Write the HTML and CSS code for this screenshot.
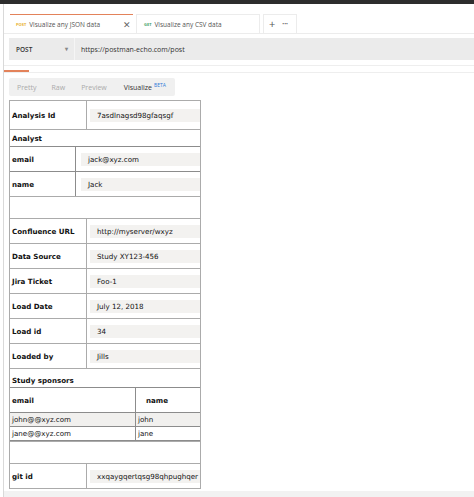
FILE: index.html
```html
<!DOCTYPE html>
<html>
<head>
<meta charset="utf-8">
<link rel="stylesheet" href="styles.css">
</head>
<body>
<div class="topbar"></div>
<div class="main">
  <div class="tabs">
    <div class="tab active">
      <span class="method post">POST</span>
      <span class="tab-title">Visualize any JSON data</span>
      <span class="close">✕</span>
    </div>
    <div class="tab">
      <span class="method get">GET</span>
      <span class="tab-title">Visualize any CSV data</span>
    </div>
    <div class="tab-actions">
      <span class="plus">+</span>
      <span class="dots">•••</span>
    </div>
  </div>
  <div class="reqbar">
    <div class="method-select"><span>POST</span><span class="caret">▾</span></div>
    <div class="url">https://postman-echo.com/post</div>
  </div>
  <div class="resp-tabs"><div class="resp-active"></div></div>
  <div class="vtabs">
    <span class="vtab">Pretty</span>
    <span class="vtab">Raw</span>
    <span class="vtab">Preview</span>
    <span class="vtab on">Visualize<sup>BETA</sup></span>
  </div>
  <table class="data">
    <tr class="r30"><th>Analysis Id</th><td><div class="val">7asdlnagsd98gfaqsgf</div></td></tr>
    <tr><td colspan="2" class="group">
      <div class="ghead">Analyst</div>
      <table class="inner">
        <tr><th>email</th><td><div class="val">jack@xyz.com</div></td></tr>
        <tr><th>name</th><td><div class="val">Jack</div></td></tr>
      </table>
    </td></tr>
    <tr class="empty"><td colspan="2"></td></tr>
    <tr><th>Confluence URL</th><td><div class="val">http://myserver/wxyz</div></td></tr>
    <tr><th>Data Source</th><td><div class="val">Study XY123-456</div></td></tr>
    <tr><th>Jira Ticket</th><td><div class="val">Foo-1</div></td></tr>
    <tr><th>Load Date</th><td><div class="val">July 12, 2018</div></td></tr>
    <tr><th>Load id</th><td><div class="val">34</div></td></tr>
    <tr><th>Loaded by</th><td><div class="val">Jills</div></td></tr>
    <tr><td colspan="2" class="group">
      <div class="ghead sp">Study sponsors</div>
      <table class="list">
        <tr class="lh"><th class="c1">email</th><th class="c2">name</th></tr>
        <tr class="odd"><td>john@@xyz.com</td><td>john</td></tr>
        <tr><td>jane@@xyz.com</td><td>jane</td></tr>
      </table>
    </td></tr>
    <tr class="empty"><td colspan="2"></td></tr>
    <tr><th>git id</th><td><div class="val">xxqaygqertqsg98qhpughqer</div></td></tr>
  </table>
  <div class="foot"></div>
</div>
</body>
</html>
```
FILE: styles.css
```css
html, body {
  margin: 0;
  padding: 0;
  background: #fff;
  height: 497px;
  overflow: hidden;
}
body {
  font-family: "Open Sans", "Liberation Sans", sans-serif;
  color: #333;
}
.topbar {
  height: 4px;
  background: #2d2d2d;
}
.main {
  margin-left: 3px;
  border-left: 1px solid #d9d9d9;
  height: 493px;
  display: flex;
  flex-direction: column;
  position: relative;
}
.tabs {
  display: flex;
  align-items: stretch;
  margin-top: 10px;
  padding-left: 6px;
  height: 19px;
  border-bottom: 1px solid #ececec;
}
.tab {
  width: 124px;
  box-sizing: border-box;
  display: flex;
  align-items: center;
  padding-left: 7px;
  border: 1px solid #ececec;
  border-bottom: none;
  margin-right: 3px;
  font-size: 6.5px;
  color: #555;
}
.tab.active {
  width: 123px;
  border: none;
  border-top: 1px solid #e3825a;
  padding-left: 6px;
}
.method {
  font-size: 4px;
  font-weight: 700;
  margin-right: 3px;
}
.method.post { color: #e9b02c; }
.method.get { color: #3fa36b; }
.tab-title { flex: 1; }
.close {
  font-size: 9px;
  font-weight: 300;
  color: #666;
  margin-right: 2px;
}
.tab-actions {
  display: flex;
  align-items: center;
  border: 1px solid #ececec;
  border-bottom: none;
  width: 34px;
  box-sizing: border-box;
  padding-left: 5px;
  gap: 7px;
  color: #555;
}
.plus { font-size: 11px; line-height: 10px; }
.dots { font-size: 5px; letter-spacing: 0; }
.reqbar {
  margin-top: 4px;
  margin-left: 5px;
  height: 22px;
  background: #ebebeb;
  display: flex;
  align-items: center;
  font-size: 7px;
  color: #333;
}
.method-select {
  width: 66px;
  box-sizing: border-box;
  height: 100%;
  display: flex;
  align-items: center;
  justify-content: space-between;
  padding: 0 6px 0 7px;
  border-right: 1px solid #f5f5f5;
  font-weight: 600;
  font-size: 6.5px;
}
.caret { font-size: 6px; color: #888; }
.url { padding-left: 6px; }
.resp-tabs {
  margin-top: 5px;
  height: 6px;
  border-top: 1px solid #eeeeee;
  border-bottom: 1px solid #eeeeee;
  position: relative;
}
.resp-active {
  position: absolute;
  left: 0;
  bottom: 0;
  width: 25px;
  height: 2px;
  background: #e3825a;
}
.vtabs {
  margin: 5px 0 0 5px;
  width: 166px;
  height: 18px;
  background: #f0f0f0;
  border-radius: 2px;
  display: flex;
  align-items: center;
  font-size: 7px;
  color: #aaa;
  box-sizing: border-box;
  padding-left: 8px;
}
.vtab:nth-child(1) { margin-right: 15px; }
.vtab:nth-child(2) { margin-right: 16px; }
.vtab:nth-child(3) { margin-right: 17px; }
.vtab.on { color: #333; margin-right: 0; }
.vtab sup { font-size: 5px; color: #2f7ad8; margin-left: 2px; }
table.data {
  margin: 4px 0 0 5px;
  width: 192px;
  border-collapse: collapse;
  font-family: "DejaVu Sans", Verdana, sans-serif;
  font-size: 7.1px;
  color: #111;
}
table.data > tbody > tr > th,
table.data > tbody > tr > td {
  border: 1px solid #ababab;
  height: 24px;
  padding: 0;
}
table.data > tbody > tr > th {
  width: 74px;
  text-align: left;
  padding-left: 2px;
  font-weight: 700;
}
table.data > tbody > tr.r30 > th,
table.data > tbody > tr.r30 > td { height: 28px; }
table.data > tbody > tr > td { padding: 0 0 0 3px; }
.val {
  background: #f3f2f0;
  color: #111;
  line-height: 13px;
  padding-left: 7px;
  white-space: nowrap;
  overflow: hidden;
}
table.data > tbody > tr > td.group { padding: 0; height: auto; }
.ghead {
  font-weight: 700;
  padding: 4px 0 2px 2px;
  line-height: 10px;
}
.ghead.sp { padding: 7px 0 1px 2px; }
table.data > tbody > tr.empty > td { height: 21px; }
table.inner, table.list {
  width: 100%;
  border-collapse: collapse;
  font-size: 7.1px;
}
table.inner th, table.inner td {
  border: 1px solid #8c8c8c;
  height: 24px;
  padding: 0;
}
table.inner tr > *:first-child { border-left: none; }
table.inner tr > *:last-child { border-right: none; }
table.inner tr:last-child > * { border-bottom: none; }
table.inner th {
  width: 63px;
  text-align: left;
  padding-left: 2px;
  font-weight: 700;
}
table.inner td { padding-left: 5px; }
table.list th, table.list td {
  border: 1px solid #8c8c8c;
  padding: 0 0 0 2px;
  text-align: left;
}
table.list tr > *:first-child { border-left: none; }
table.list tr > *:last-child { border-right: none; }
table.list tr:last-child > * { border-bottom: 1px solid #8c8c8c; }
table.list tr.lh > th { height: 24px; font-weight: 700; }
table.list th.c1 { width: 123px; }
table.list th.c2 { padding-left: 10px; }
table.list td { height: 13px; }
table.list tr.odd td { background: #f1f0ee; }
.foot {
  position: absolute;
  left: 0;
  right: 0;
  bottom: 0;
  height: 6px;
  background: #f2f2f2;
}
```
